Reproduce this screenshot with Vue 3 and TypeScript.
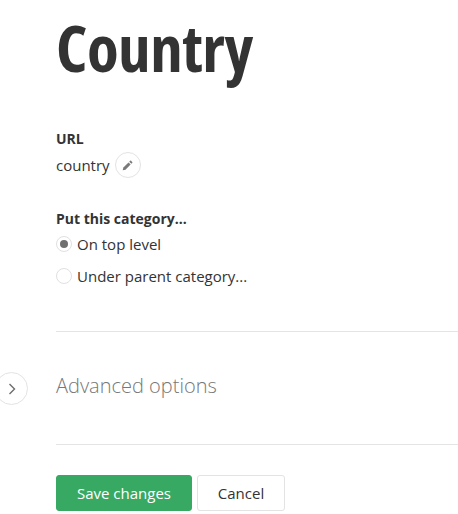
<script setup lang="ts">
const options = [
  { label: 'On top level', checked: true },
  { label: 'Under parent category...', checked: false },
]
</script>

<template>
  <main class="page">
    <h1 class="title">Country</h1>
    <section class="field">
      <div class="label">URL</div>
      <div class="url-row">
        <span>country</span>
        <button class="edit" type="button" aria-label="Edit">
          <svg width="11" height="11" viewBox="0 0 12 12">
            <path d="M0.8 11.2l0.7-3 5.6-5.6 2.3 2.3-5.6 5.6z" fill="#7a7a7a" />
            <path d="M7.9 1.8l0.9-0.9a0.8 0.8 0 0 1 1.1 0l1.2 1.2a0.8 0.8 0 0 1 0 1.1l-0.9 0.9z" fill="#7a7a7a" />
          </svg>
        </button>
      </div>
    </section>
    <section class="placement">
      <div class="label">Put this category...</div>
      <div class="radios">
        <label v-for="o in options" :key="o.label" class="radio">
          <span class="dot" :class="{ on: o.checked }"></span>
          <span>{{ o.label }}</span>
        </label>
      </div>
    </section>
    <hr class="rule first" />
    <div class="advanced">
      <button class="toggle" type="button" aria-label="Expand">
        <svg width="8" height="12" viewBox="0 0 8 12">
          <path d="M1.5 1l5 5-5 5" fill="none" stroke="#6d6d6d" stroke-width="1.4" />
        </svg>
      </button>
      <h2 class="adv-title">Advanced options</h2>
    </div>
    <hr class="rule" />
    <div class="actions">
      <button class="btn save" type="button">Save changes</button>
      <button class="btn cancel" type="button">Cancel</button>
    </div>
  </main>
</template>

<style>
html, body { margin: 0; background: #fff; overflow: hidden; }
</style>

<style scoped>
.page {
  width: 458px;
  height: 514px;
  box-sizing: border-box;
  padding-left: 56px;
  overflow: hidden;
  font-family: "Open Sans", sans-serif;
  font-size: 15px;
  color: #333;
}
.title {
  margin: 0;
  height: 96px;
  font-size: 65px;
  line-height: 94px;
  font-weight: 700;
  font-stretch: 75%;
  color: #333;
  letter-spacing: -0.5px;
}
.field { margin-top: 33px; }
.label { font-size: 14px; font-weight: 700; line-height: 20px; }
.url-row {
  display: flex;
  align-items: center;
  gap: 5px;
  margin-top: 3px;
  height: 26px;
}
.edit, .toggle {
  display: flex;
  align-items: center;
  justify-content: center;
  padding: 0;
  background: #fff;
  border: 1px solid #e3e3e3;
  border-radius: 50%;
  box-sizing: border-box;
}
.edit { width: 26px; height: 26px; }
.placement { margin-top: 31px; }
.radios { display: flex; flex-direction: column; gap: 12px; margin-top: 5px; }
.radio { display: flex; align-items: center; gap: 5px; height: 20px; }
.dot {
  width: 16px;
  height: 16px;
  box-sizing: border-box;
  border: 1px solid #e0e0e0;
  border-radius: 50%;
  display: flex;
  align-items: center;
  justify-content: center;
}
.dot.on::after {
  content: "";
  width: 8px;
  height: 8px;
  border-radius: 50%;
  background: #6f6f6f;
}
.rule { margin: 0; border: 0; border-top: 1px solid #e4e4e4; }
.first { margin-top: 45px; }
.advanced { position: relative; height: 112px; display: flex; align-items: center; }
.toggle {
  position: absolute;
  left: -61px;
  top: 40px;
  width: 33px;
  height: 33px;
}
.adv-title {
  margin: 0 0 6px;
  font-size: 20px;
  font-weight: 300;
  color: #777;
}
.actions { display: flex; gap: 5px; margin-top: 30px; }
.btn {
  height: 36px;
  box-sizing: border-box;
  border-radius: 3px;
  font: inherit;
  padding: 0;
}
.save { width: 136px; background: #37a963; border: 1px solid #37a963; color: #fff; font-weight: 500; }
.cancel { width: 88px; background: #fff; border: 1px solid #e3e3e3; color: #333; }
</style>
